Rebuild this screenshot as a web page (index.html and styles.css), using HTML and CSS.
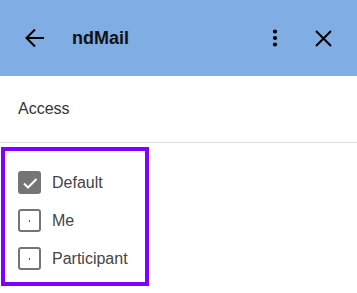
FILE: index.html
```html
<!DOCTYPE html>
<html>
<head>
<meta charset="utf-8">
<link rel="stylesheet" href="styles.css">
</head>
<body>
<header class="bar">
  <button class="icon-btn back" aria-label="Back">
    <svg width="20" height="20" viewBox="0 0 20 20"><path d="M1.5 10H19M10 1.5L1.5 10L10 18.5" fill="none" stroke="#000" stroke-width="2"/></svg>
  </button>
  <h1 class="title">ndMail</h1>
  <button class="icon-btn more" aria-label="More">
    <svg width="6" height="18" viewBox="0 0 6 18"><circle cx="3" cy="2.5" r="2.1" fill="#000"/><circle cx="3" cy="9" r="2.1" fill="#000"/><circle cx="3" cy="15.5" r="2.1" fill="#000"/></svg>
  </button>
  <button class="icon-btn close" aria-label="Close">
    <svg width="17" height="17" viewBox="0 0 17 17"><path d="M1 1L16 16M16 1L1 16" fill="none" stroke="#000" stroke-width="2"/></svg>
  </button>
</header>
<div class="section">Access</div>
<div class="options">
  <label class="opt">
    <span class="box checked"><svg width="16" height="16" viewBox="0 0 16 16"><path d="M2 8.5L6 12.5L14.5 4" fill="none" stroke="#fff" stroke-width="2"/></svg></span>
    <span class="lbl">Default</span>
  </label>
  <label class="opt">
    <span class="box"><span class="dot"></span></span>
    <span class="lbl">Me</span>
  </label>
  <label class="opt">
    <span class="box"><span class="dot"></span></span>
    <span class="lbl">Participant</span>
  </label>
</div>
</body>
</html>
```
FILE: styles.css
```css
html, body {
  margin: 0;
  padding: 0;
  background: #fff;
  font-family: "Liberation Sans", Arial, sans-serif;
}
.bar {
  height: 76px;
  background: #80ade3;
  display: flex;
  align-items: center;
  padding: 0 0 0 25px;
  box-sizing: border-box;
}
.icon-btn {
  border: 0;
  background: none;
  padding: 0;
  display: flex;
  align-items: center;
  justify-content: center;
}
.back { margin-right: 27px; }
.title {
  margin: 0;
  font-size: 18px;
  font-weight: bold;
  color: #111;
  flex: 1;
}
.more { margin-right: 37px; }
.close { margin-right: 25px; }
.section {
  height: 67px;
  box-sizing: border-box;
  border-bottom: 1px solid #dcdcdc;
  padding-left: 18px;
  display: flex;
  align-items: center;
  font-size: 16px;
  color: #333;
}
.options {
  margin: 4px 0 0 1px;
  width: 148px;
  box-sizing: border-box;
  border: 4px solid #8000ff;
  padding: 20px 0 12px 13px;
  display: flex;
  flex-direction: column;
  gap: 15px;
}
.opt {
  display: flex;
  align-items: center;
  gap: 11px;
  height: 23px;
}
.box {
  width: 23px;
  height: 23px;
  box-sizing: border-box;
  border: 2px solid #757575;
  border-radius: 3px;
  display: flex;
  align-items: center;
  justify-content: center;
}
.box.checked {
  background: #757575;
}
.dot {
  width: 1px;
  height: 2px;
  background: #555;
}
.lbl {
  font-size: 16px;
  color: #444;
}
```
